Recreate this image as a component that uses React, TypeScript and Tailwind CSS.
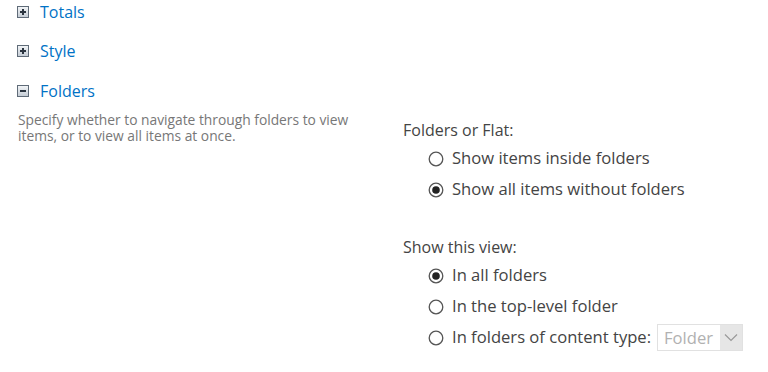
import React from "react";

function Toggle({ open }: { open: boolean }) {
  return (
    <svg width="12" height="12" viewBox="0 0 12 12" className="shrink-0">
      <defs>
        <linearGradient id={open ? "gm" : "gp"} x1="0" y1="0" x2="0" y2="1">
          <stop offset="0" stopColor="#f4f6f8" />
          <stop offset="1" stopColor="#c3cbd4" />
        </linearGradient>
      </defs>
      <rect x="0.5" y="0.5" width="11" height="11" fill={`url(#${open ? "gm" : "gp"})`} stroke="#5f6b78" />
      <rect x="3" y="5" width="6" height="2" fill="#2b3540" />
      {!open && <rect x="5" y="3" width="2" height="6" fill="#2b3540" />}
    </svg>
  );
}

function Radio({ checked }: { checked: boolean }) {
  return (
    <svg width="16" height="16" viewBox="0 0 16 16" className="shrink-0">
      <circle cx="8" cy="8" r="6.8" fill="white" stroke="#555" strokeWidth="1.3" />
      {checked && <circle cx="8" cy="8" r="3.8" fill="#222" />}
    </svg>
  );
}

function Header({ label, open }: { label: string; open: boolean }) {
  return (
    <div className="flex items-center gap-[11px] h-[24px] pl-[17px]">
      <Toggle open={open} />
      <span className="text-[16px] text-[#0072c6]">{label}</span>
    </div>
  );
}

function Option({ label, checked, children }: { label: string; checked: boolean; children?: React.ReactNode }) {
  return (
    <div className="flex items-center gap-[8px] h-[31px] pl-[25px]">
      <Radio checked={checked} />
      <span className="text-[16.6px] text-[#444]">{label}</span>
      {children}
    </div>
  );
}

export default function App() {
  return (
    <div
      className="w-[768px] h-[372px] bg-white overflow-hidden"
      style={{ fontFamily: '"Open Sans", "Noto Sans", sans-serif' }}
    >
      <div>
        <Header label="Totals" open={false} />
        <div className="h-[15px]" />
        <Header label="Style" open={false} />
        <div className="h-[16px]" />
        <Header label="Folders" open={true} />
      </div>
      <div className="flex">
        <div className="w-[403px] pl-[18px] pt-[9px] text-[13.8px] leading-[16px] text-[#777]">
          <p className="w-[345px]">Specify whether to navigate through folders to view items, or to view all items at once.</p>
        </div>
        <div className="pt-[14px]">
          <div className="text-[16px] text-[#444] h-[26px] leading-[26px]">Folders or Flat:</div>
          <Option label="Show items inside folders" checked={false} />
          <Option label="Show all items without folders" checked={true} />
          <div className="h-[29px]" />
          <div className="text-[16px] text-[#444] h-[26px] leading-[26px]">Show this view:</div>
          <Option label="In all folders" checked={true} />
          <Option label="In the top-level folder" checked={false} />
          <Option label="In folders of content type:" checked={false}>
            <div className="flex h-[27px] border border-[#e1e1e1] -ml-[2px]">
              <span className="px-[6px] text-[16.6px] leading-[25px] text-[#b1b1b1] bg-white w-[62px]">Folder</span>
              <span className="w-[22px] bg-[#e6e6e6] flex items-center justify-center">
                <svg width="14" height="9" viewBox="0 0 14 9">
                  <path d="M1 1.5 L7 7.5 L13 1.5" fill="none" stroke="#999" strokeWidth="1.2" />
                </svg>
              </span>
            </div>
          </Option>
        </div>
      </div>
    </div>
  );
}
